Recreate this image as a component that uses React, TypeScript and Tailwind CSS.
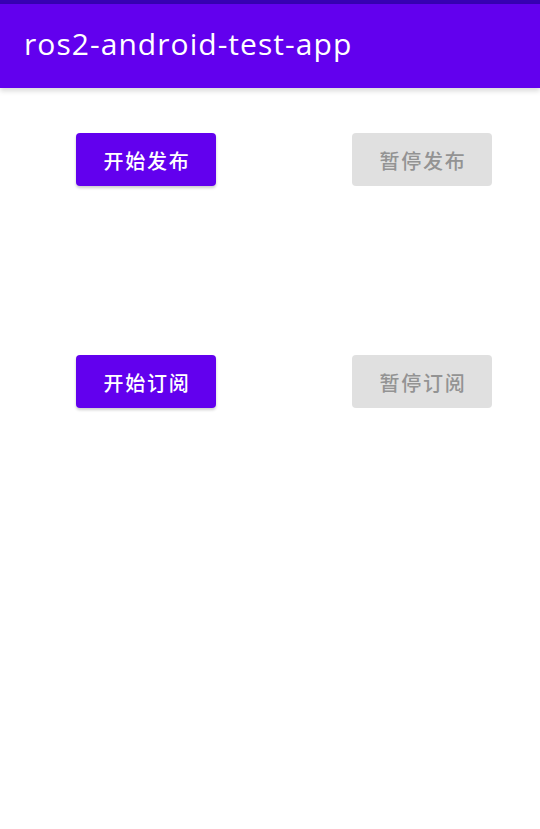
export default function App() {
  const btn =
    'w-[140px] h-[53px] rounded-[4px] text-[20px] font-medium tracking-[0.09em] flex items-center justify-center pt-[2px] pl-[2px]';
  const on = btn + ' bg-[#6200ee] text-white shadow-[0_2px_3px_rgba(0,0,0,0.2)]';
  const off = btn + ' bg-[#e0e0e0] text-[#939393]';

  return (
    <div
      className="w-[540px] h-[829px] bg-white flex flex-col"
      style={{ fontFamily: '"Noto Sans CJK SC", sans-serif' }}
    >
      <div className="h-[4px] bg-[#3700b3]" />
      <div className="h-[84px] bg-[#6200ee] flex items-center px-6 shadow-[0_3px_5px_rgba(0,0,0,0.15)] z-10">
        <span
          className="text-white text-[30px] tracking-[0.035em] mt-[-6px]"
          style={{ fontFamily: '"Open Sans", sans-serif' }}
        >
          ros2-android-test-app
        </span>
      </div>

      <div className="flex justify-between pl-[76px] pr-[48px] mt-[45px]">
        <button className={on}>开始发布</button>
        <button className={off}>暂停发布</button>
      </div>

      <div className="flex justify-between pl-[76px] pr-[48px] mt-[169px]">
        <button className={on}>开始订阅</button>
        <button className={off}>暂停订阅</button>
      </div>
    </div>
  );
}
